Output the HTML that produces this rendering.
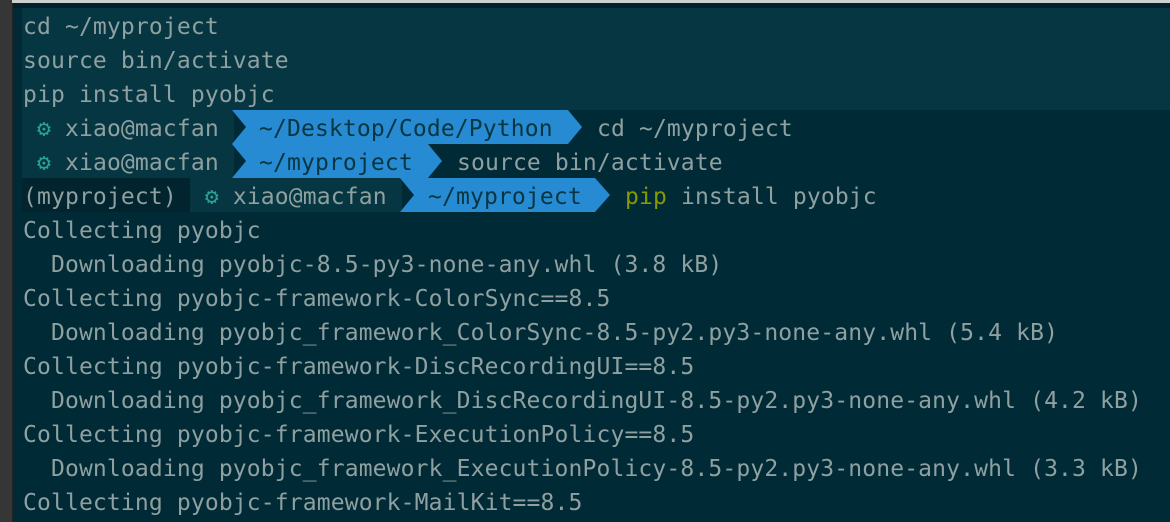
<!DOCTYPE html>
<html><head><meta charset="utf-8"><style>
html,body{margin:0;padding:0;width:1170px;height:522px;overflow:hidden;background:#002a36;}
.t{position:absolute;font-family:"DejaVu Sans Mono","Liberation Mono",monospace;font-size:23px;line-height:34px;color:#8fa0a0;white-space:pre;letter-spacing:0.14px;margin-top:2px}
.g{color:#2aa198}
.b{color:#073642}
.y{color:#859900}
</style></head><body>
<div style="position:absolute;left:0;top:0;width:1170px;height:3px;background:#cfcfcf"></div>
<div style="position:absolute;left:0;top:3px;width:1170px;height:5px;background:#01202a"></div>
<div style="position:absolute;left:0;top:0;width:12px;height:522px;background:#363636"></div>
<div style="position:absolute;left:12px;top:3px;width:1px;height:519px;background:#222"></div>
<div style="position:absolute;left:22px;top:8px;width:1148px;height:102px;background:#063642"></div>
<div style="position:absolute;left:22px;top:110px;width:212px;height:68px;background:#063642"></div>
<div style="position:absolute;left:22px;top:178px;width:168px;height:34px;background:#01242f"></div>
<div style="position:absolute;left:190px;top:178px;width:212px;height:34px;background:#063642"></div>
<svg style="position:absolute;left:0;top:0" width="1170" height="522">
<polygon fill="#268bd2" points="232,110 568,110 582,127 568,144 232,144 246,127"/>
<polygon fill="#268bd2" points="232,144 428,144 442,161 428,178 232,178 246,161"/>
<polygon fill="#268bd2" points="400,178 595,178 610,195 595,212 400,212 414,195"/>
</svg>
<div class="t" style="left:23px;top:8px">cd ~/myproject
source bin/activate
pip install pyobjc</div>
<div class="t" style="left:23px;top:110px"> <span class="g">⚙</span> xiao@macfan</div>
<div class="t" style="left:23px;top:144px"> <span class="g">⚙</span> xiao@macfan</div>
<div class="t" style="left:23px;top:178px">(myproject)  <span class="g">⚙</span> xiao@macfan</div>
<div class="t b" style="left:259px;top:110px">~/Desktop/Code/Python</div>
<div class="t b" style="left:259px;top:144px">~/myproject</div>
<div class="t b" style="left:428px;top:178px">~/myproject</div>
<div class="t" style="left:597px;top:110px">cd ~/myproject</div>
<div class="t" style="left:457px;top:144px">source bin/activate</div>
<div class="t" style="left:625px;top:178px"><span class="y">pip</span> install pyobjc</div>
<div class="t" style="left:23px;top:212px">Collecting pyobjc
  Downloading pyobjc-8.5-py3-none-any.whl (3.8 kB)
Collecting pyobjc-framework-ColorSync==8.5
  Downloading pyobjc_framework_ColorSync-8.5-py2.py3-none-any.whl (5.4 kB)
Collecting pyobjc-framework-DiscRecordingUI==8.5
  Downloading pyobjc_framework_DiscRecordingUI-8.5-py2.py3-none-any.whl (4.2 kB)
Collecting pyobjc-framework-ExecutionPolicy==8.5
  Downloading pyobjc_framework_ExecutionPolicy-8.5-py2.py3-none-any.whl (3.3 kB)
Collecting pyobjc-framework-MailKit==8.5</div>
</body></html>
